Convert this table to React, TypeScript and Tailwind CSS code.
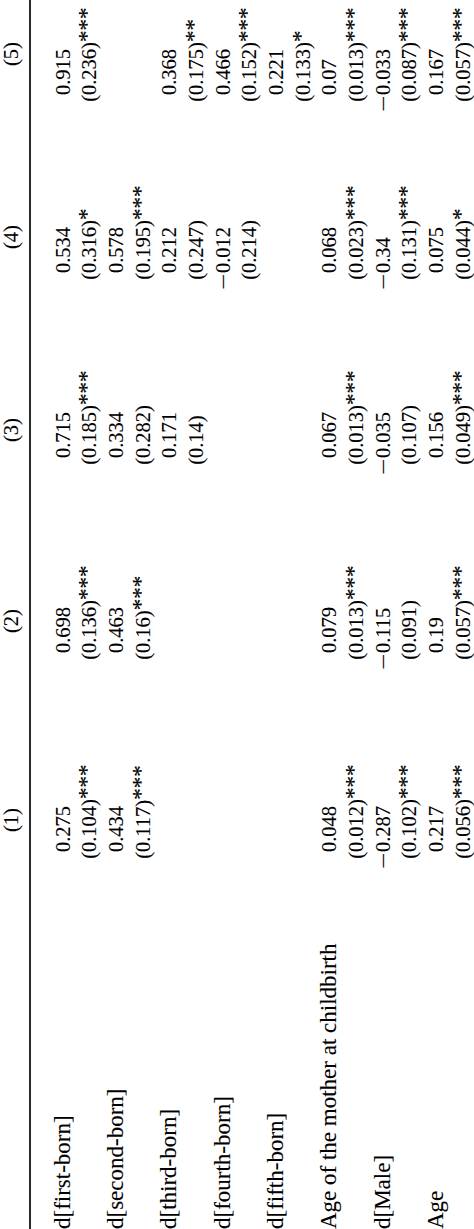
const rows: { label: string; cells: (string[] | null)[] }[] = [
  {
    label: "d[first-born]",
    cells: [
      ["0.275", "(0.104)***"],
      ["0.698", "(0.136)***"],
      ["0.715", "(0.185)***"],
      ["0.534", "(0.316)*"],
      ["0.915", "(0.236)***"],
    ],
  },
  {
    label: "d[second-born]",
    cells: [
      ["0.434", "(0.117)***"],
      ["0.463", "(0.16)***"],
      ["0.334", "(0.282)"],
      ["0.578", "(0.195)***"],
      null,
    ],
  },
  {
    label: "d[third-born]",
    cells: [null, null, ["0.171", "(0.14)"], ["0.212", "(0.247)"], ["0.368", "(0.175)**"]],
  },
  {
    label: "d[fourth-born]",
    cells: [null, null, null, ["−0.012", "(0.214)"], ["0.466", "(0.152)***"]],
  },
  {
    label: "d[fifth-born]",
    cells: [null, null, null, null, ["0.221", "(0.133)*"]],
  },
  {
    label: "Age of the mother at childbirth",
    cells: [
      ["0.048", "(0.012)***"],
      ["0.079", "(0.013)***"],
      ["0.067", "(0.013)***"],
      ["0.068", "(0.023)***"],
      ["0.07", "(0.013)***"],
    ],
  },
  {
    label: "d[Male]",
    cells: [
      ["−0.287", "(0.102)***"],
      ["−0.115", "(0.091)"],
      ["−0.035", "(0.107)"],
      ["−0.34", "(0.131)***"],
      ["−0.033", "(0.087)***"],
    ],
  },
  {
    label: "Age",
    cells: [
      ["0.217", "(0.056)***"],
      ["0.19", "(0.057)***"],
      ["0.156", "(0.049)***"],
      ["0.075", "(0.044)*"],
      ["0.167", "(0.057)***"],
    ],
  },
];

// header offsets inside each column, so "(k)" sits over its numbers
const headPad = ["pl-[36px]", "pl-[36px]", "pl-[32px]", "pl-[40px]", "pl-[45px]"];

function Num({ v }: { v: string }) {
  const m = v.match(/^([(−]?)([^*]*?)(\**)$/);
  const prefix = m ? m[1] : "";
  const body = m ? m[2] : v;
  const stars = m ? m[3] : "";
  return (
    <div className="flex whitespace-nowrap">
      <span className="w-[16px] text-right shrink-0">
        {prefix === "−" ? (
          <span className="inline-block origin-right scale-x-[1.4]">−</span>
        ) : (
          prefix
        )}
      </span>
      <span>{body}</span>
      {stars && (
        <span className="relative -top-[2px] text-[23px] leading-[26px]">{stars}</span>
      )}
    </div>
  );
}

export default function App() {
  return (
    <div className="w-[474px] h-[1229px] overflow-hidden bg-white relative">
      <div
        className="w-[1229px] h-[474px] origin-top-left -rotate-90 translate-y-[1229px] text-black [-webkit-text-stroke:0.1px_#000]"
        style={{ fontFamily: '"Liberation Serif", "Times New Roman", serif' }}
      >
        <div className="grid grid-cols-[361px_199px_195px_185px_178px_111px] h-[29px] border-b-2 border-[#2a2a2a] text-[20.5px] leading-[22px] box-content">
          <div />
          {[1, 2, 3, 4, 5].map((n, i) => (
            <div key={n} className={headPad[i]}>
              ({n})
            </div>
          ))}
        </div>
        <div className="pt-[18.75px] grid grid-cols-[361px_199px_195px_185px_178px_111px] leading-[26.67px]">
          {rows.map((r) => (
            <div key={r.label} className="contents">
              <div className="h-[53.33px] text-[23px] whitespace-nowrap">{r.label}</div>
              {r.cells.map((c, i) => (
                <div key={i} className="h-[53.33px] text-[20.5px]">
                  {c && (
                    <>
                      <Num v={c[0]} />
                      <Num v={c[1]} />
                    </>
                  )}
                </div>
              ))}
            </div>
          ))}
        </div>
      </div>
    </div>
  );
}
